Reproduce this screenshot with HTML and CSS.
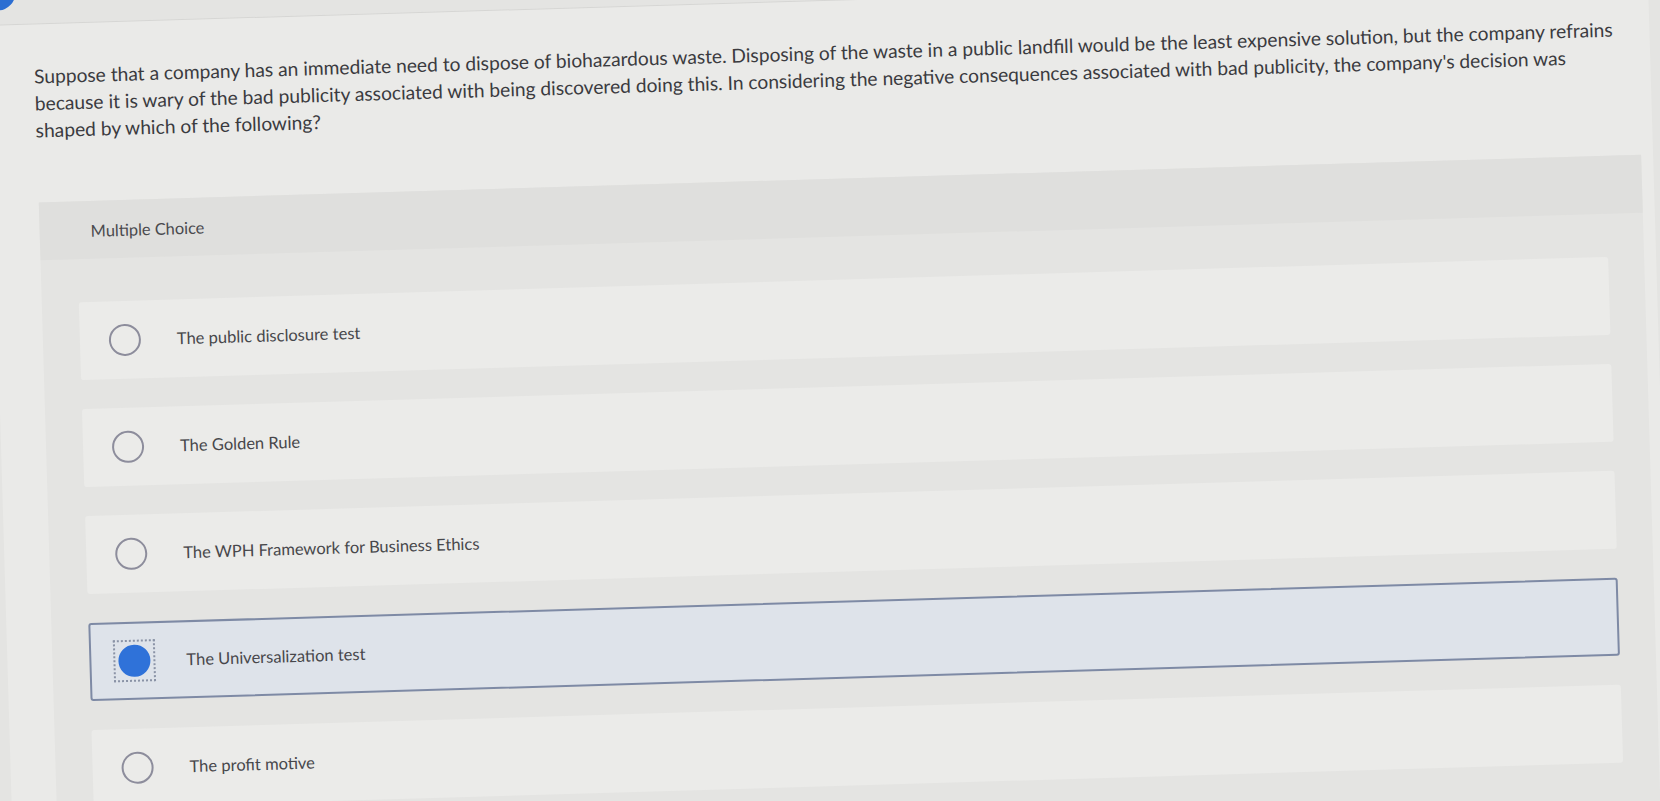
FILE: index.html
```html
<!DOCTYPE html>
<html lang="en">
<head>
<meta charset="utf-8">
<title>Multiple Choice</title>
<link rel="stylesheet" href="styles.css">
</head>
<body>
<div class="page">
  <span class="badge"></span>
  <div class="question">
    <p class="prompt">
      <span class="line">Suppose that a company has an immediate need to dispose of biohazardous waste. Disposing of the waste in a public landfill would be the least expensive solution, but the company refrains</span>
      <span class="line">because it is wary of the bad publicity associated with being discovered doing this. In considering the negative consequences associated with bad publicity, the company's decision was</span>
      <span class="line">shaped by which of the following?</span>
    </p>
  </div>
  <section class="mc">
    <header class="mc-head">Multiple Choice</header>
    <div class="mc-body">
      <div class="opt"><span class="radio"></span><span class="opt-text">The public disclosure test</span></div>
      <div class="opt"><span class="radio"></span><span class="opt-text">The Golden Rule</span></div>
      <div class="opt"><span class="radio"></span><span class="opt-text">The WPH Framework for Business Ethics</span></div>
      <div class="opt selected"><span class="focus-ring"><span class="radio checked"></span></span><span class="opt-text">The Universalization test</span></div>
      <div class="opt"><span class="radio"></span><span class="opt-text">The profit motive</span></div>
    </div>
  </section>
</div>
</body>
</html>
```

FILE: styles.css
```css
html {
  background: #e4e4e2;
  overflow: hidden;
}
body {
  margin: 0;
  overflow: hidden;
  font-family: Lato, "Open Sans", "Liberation Sans", sans-serif;
}
.page {
  position: relative;
  width: 1660px;
  min-height: 920px;
  box-sizing: border-box;
  padding: 38px 0 0 44px;
  background: #eaeae8;
  border-top: 1px solid #d6d6d4;
  transform: rotate(-1.7deg);
  transform-origin: 830px 400px;
}
.badge {
  position: absolute;
  top: -51px;
  left: -8px;
  width: 36px;
  height: 36px;
  border-radius: 50%;
  background: #2c6ed2;
}
.prompt {
  margin: 0;
  font-size: 19.2px;
  line-height: 27px;
  color: #3b3b3f;
}
.line {
  display: block;
  white-space: nowrap;
}
.mc {
  margin: 59px 0 0 1px;
  width: 1603px;
  background: #e4e4e2;
}
.mc-head {
  height: 58px;
  display: flex;
  align-items: center;
  padding-left: 51px;
  background: #dfdfdd;
  font-size: 16.4px;
  color: #4a4a4e;
}
.mc-body {
  display: flex;
  flex-direction: column;
  gap: 29px;
  padding: 43px 36px 60px 37px;
}
.opt {
  height: 78px;
  box-sizing: border-box;
  display: flex;
  align-items: center;
  gap: 36px;
  padding-left: 29px;
  background: #ebebe9;
  border-radius: 3px;
  font-size: 16.5px;
  color: #47474b;
}
.opt.selected {
  background: #dee3ea;
  border: 2px solid #7e8aa5;
  padding-left: 27px;
}
.radio {
  flex: none;
  width: 32px;
  height: 32px;
  box-sizing: border-box;
  border-radius: 50%;
  border: 2px solid #8d8d9c;
}
.focus-ring {
  flex: none;
  display: flex;
  margin: -5px;
  padding: 3px;
  border: 2px dotted #8a93a6;
}
.radio.checked {
  background: #2f72d9;
  border-color: #2f72d9;
}
```
